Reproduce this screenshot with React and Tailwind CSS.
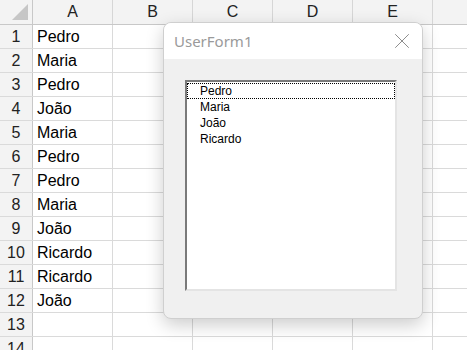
import { X } from "lucide-react";

const cols = ["A", "B", "C", "D", "E", ""];
const names = ["Pedro", "Maria", "Pedro", "João", "Maria", "Pedro", "Pedro", "Maria", "João", "Ricardo", "Ricardo", "João", "", ""];
const items = ["Pedro", "Maria", "João", "Ricardo"];

export default function App() {
  return (
    <div className="relative w-[467px] h-[350px] overflow-hidden bg-white font-['Liberation_Sans',Arial,sans-serif] text-[#222]">
      {/* Column headers */}
      <div className="flex h-[25px] bg-[#f3f3f3] border-b border-[#c8c8c8]">
        <div className="relative w-[33px] shrink-0 border-r border-[#c8c8c8]">
          <div className="absolute right-[4px] bottom-[4px] w-0 h-0 border-l-[16px] border-l-transparent border-b-[16px] border-b-[#c6c6c6]" />
        </div>
        {cols.map((c, i) => (
          <div
            key={i}
            className="w-[80px] shrink-0 flex items-center justify-center text-[16px] border-r border-[#d6d6d6]"
          >
            {c}
          </div>
        ))}
      </div>

      {/* Rows */}
      {names.map((n, i) => (
        <div key={i} className="flex h-[24px] border-b border-[#dadada]">
          <div className="w-[33px] shrink-0 bg-[#f3f3f3] border-r border-[#c8c8c8] flex items-center justify-center text-[16px]">
            {i + 1}
          </div>
          <div className="w-[80px] shrink-0 border-r border-[#dadada] flex items-center pl-[4px] text-[16px] text-black">
            {n}
          </div>
          {[0, 1, 2, 3, 4].map((k) => (
            <div key={k} className="w-[80px] shrink-0 border-r border-[#dadada]" />
          ))}
        </div>
      ))}

      {/* UserForm dialog */}
      <div className="absolute left-[163px] top-[22px] w-[260px] h-[297px] rounded-[8px] bg-[#f0f0f0] border border-[#cfcfcf] shadow-[0_6px_18px_rgba(0,0,0,0.2)] overflow-hidden flex flex-col">
        <div className="h-[36px] shrink-0 bg-white flex items-center justify-between pl-[10px] pr-[7px]">
          <span className="text-[15px] text-[#9a9a9a] font-['Noto_Sans',sans-serif]">UserForm1</span>
          <X className="w-[26px] h-[26px] text-[#8a8a8a]" strokeWidth={0.9} />
        </div>
        <div className="flex-1 pt-[21px] pl-[21px] pr-[25px] pb-[27px]">
          <div className="h-full bg-white border-t-2 border-l-2 border-t-[#7a7a7a] border-l-[#7a7a7a] border-r-2 border-b-2 border-r-[#e4e4e4] border-b-[#e4e4e4] text-[12px] text-black">
            <div className="pt-[1px]">
              {items.map((t, i) => (
                <div
                  key={t}
                  className={
                    "h-[16px] leading-[15px] pl-[12px] " +
                    (i === 0 ? "border border-dotted border-black" : "border border-transparent")
                  }
                >
                  {t}
                </div>
              ))}
            </div>
          </div>
        </div>
      </div>
    </div>
  );
}
